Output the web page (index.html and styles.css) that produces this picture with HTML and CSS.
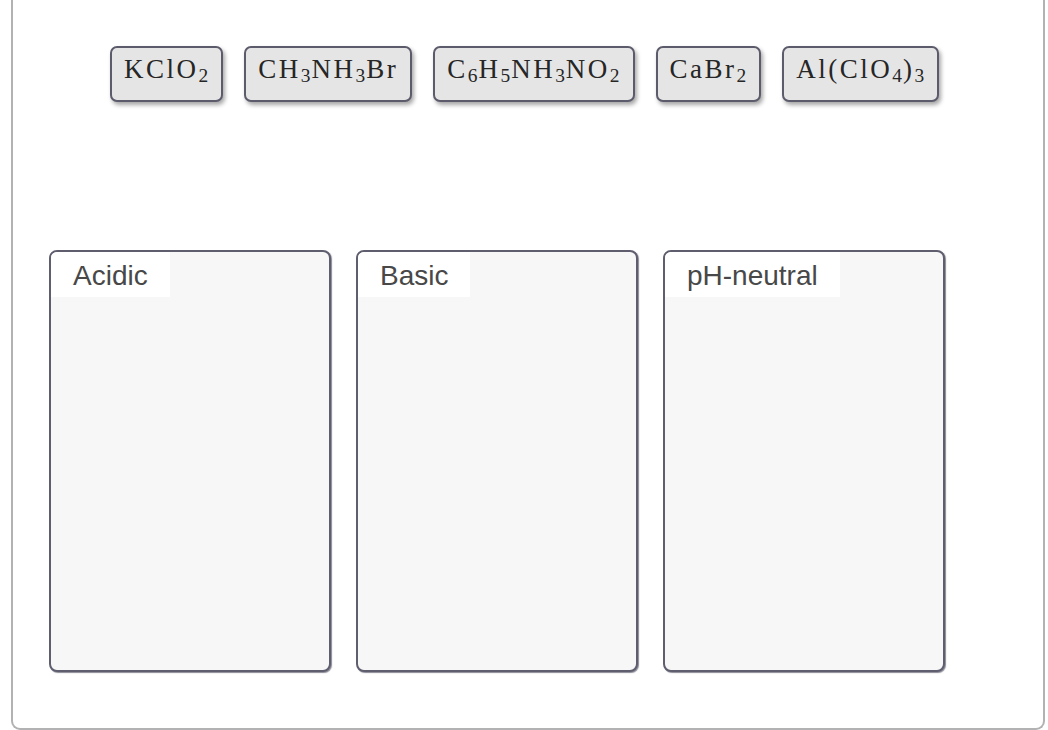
FILE: index.html
```html
<!DOCTYPE html>
<html>
<head>
<meta charset="utf-8">
<link rel="stylesheet" href="styles.css">
</head>
<body>
<div class="panel">
  <div class="chips">
    <div class="chip"><span class="formula">KClO<sub>2</sub></span></div>
    <div class="chip"><span class="formula">CH<sub>3</sub>NH<sub>3</sub>Br</span></div>
    <div class="chip"><span class="formula">C<sub>6</sub>H<sub>5</sub>NH<sub>3</sub>NO<sub>2</sub></span></div>
    <div class="chip"><span class="formula">CaBr<sub>2</sub></span></div>
    <div class="chip"><span class="formula">Al(ClO<sub>4</sub>)<sub>3</sub></span></div>
  </div>
  <div class="bins">
    <div class="bin"><div class="tab">Acidic</div></div>
    <div class="bin"><div class="tab">Basic</div></div>
    <div class="bin"><div class="tab">pH-neutral</div></div>
  </div>
</div>
</body>
</html>
```
FILE: styles.css
```css
html, body {
  margin: 0;
  padding: 0;
  background: #ffffff;
}
.panel {
  box-sizing: border-box;
  margin-left: 11px;
  width: 1034px;
  height: 730px;
  border: 2px solid #b2b2b2;
  border-top: none;
  border-radius: 0 0 9px 9px;
  padding-top: 46px;
}
.chips {
  display: flex;
  gap: 21px;
  padding-left: 97px;
}
.chip {
  box-sizing: border-box;
  height: 56px;
  padding: 0 12px 10px 12px;
  display: flex;
  align-items: center;
  border: 2px solid #5b5b6c;
  border-radius: 7px;
  background: #e5e5e5;
  box-shadow: 2px 3px 4px rgba(0, 0, 0, 0.35);
  font-family: "Liberation Serif", "Times New Roman", serif;
  font-size: 27px;
  color: #262626;
}
.formula {
  display: inline-block;
  white-space: nowrap;
  letter-spacing: 2.5px;
}
.formula sub {
  font-size: 72%;
  vertical-align: -4px;
  line-height: 0;
  letter-spacing: 0;
  margin: 0 1px 0 0;
}
.bins {
  display: flex;
  gap: 25px;
  margin-top: 148px;
  padding-left: 36px;
}
.bin {
  box-sizing: border-box;
  width: 282px;
  height: 422px;
  border: 2px solid #5e5e6f;
  border-radius: 8px;
  background: #f7f7f7;
  box-shadow: 1px 1px 1px rgba(60, 60, 80, 0.6);
  display: flex;
  flex-direction: column;
  align-items: flex-start;
}
.tab {
  background: #ffffff;
  height: 45px;
  line-height: 48px;
  padding: 0 22px;
  font-family: "Liberation Sans", Arial, sans-serif;
  font-size: 28px;
  color: #484848;
  border-top-left-radius: 6px;
}
```
